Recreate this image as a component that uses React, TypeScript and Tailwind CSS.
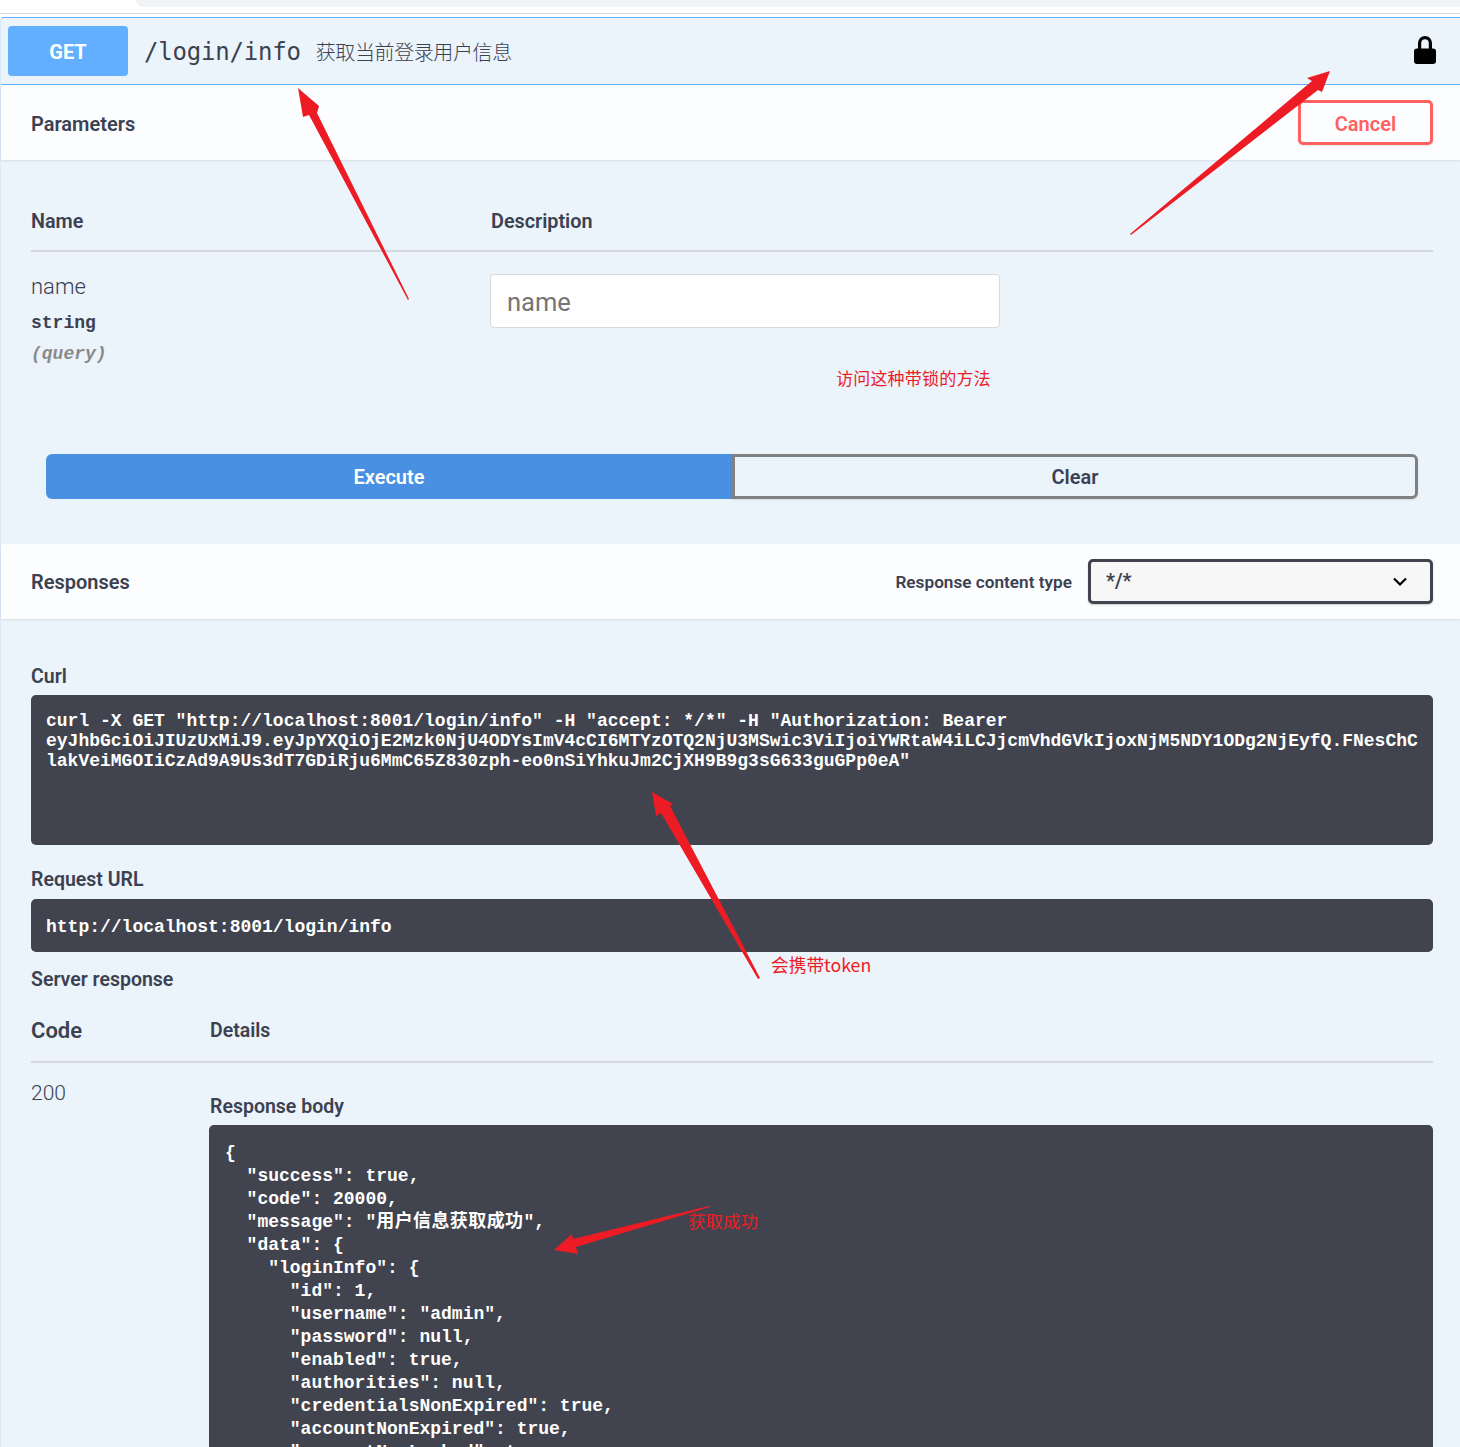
const sans = "font-['Roboto','Noto_Sans_CJK_SC',sans-serif]"
const mono = "font-['Liberation_Mono','Noto_Sans_CJK_SC',monospace]"
const cjk = "font-['Noto_Sans_CJK_SC',sans-serif]"

const curlText = `curl -X GET "http://localhost:8001/login/info" -H "accept: */*" -H "Authorization: Bearer
eyJhbGciOiJIUzUxMiJ9.eyJpYXQiOjE2Mzk0NjU4ODYsImV4cCI6MTYzOTQ2NjU3MSwic3ViIjoiYWRtaW4iLCJjcmVhdGVkIjoxNjM5NDY1ODg2NjEyfQ.FNesChC
lakVeiMGOIiCzAd9A9Us3dT7GDiRju6MmC65Z830zph-eo0nSiYhkuJm2CjXH9B9g3sG633guGPp0eA"`

const bodyTop = `{
  "success": true,
  "code": 20000,
  "message": "`

const bodyRest = `",
  "data": {
    "loginInfo": {
      "id": 1,
      "username": "admin",
      "password": null,
      "enabled": true,
      "authorities": null,
      "credentialsNonExpired": true,
      "accountNonExpired": true,
      "accountNonLocked": true,`

function Arrows() {
  return (
    <svg className="absolute left-0 top-0 pointer-events-none" width="1460" height="1447" viewBox="0 0 1460 1447">
      <g fill="#ed1c24">
        <path d="M408 300 L409 299 L317 113 L319 106 L298 88 L303 117 L309 115 Z" />
        <path d="M1130 234 L1131 235 L1318 90 L1322 92 L1330 71 L1307 78 L1312 81 Z" />
        <path d="M758 979 L760 978 L670 806 L673 804 L652 792 L656 816 L661 813 Z" />
        <path d="M709 1206 L710 1207 L576 1247 L578 1254 L554 1250 L572 1234 L573 1239 Z" />
      </g>
    </svg>
  )
}

export default function App() {
  return (
    <div className={`relative w-[1460px] h-[1447px] overflow-hidden bg-white ${sans}`}>
      <div className="h-[7px] ml-[136px] bg-[#f1f3f4] rounded-bl-[10px]" />
      <div className="mt-[6px] h-[1px] bg-[#d9d9d9]" />
      <div className="mt-[3px] border-t border-t-[#61affe] border-l border-l-[#dbe9f8] rounded-tl-[4px] bg-[#ebf3fb] h-[1430px]">
        {/* header */}
        <div className="flex items-center h-[67px] border-b border-[#61affe] pl-[7px] pr-[24px]">
          <div className="flex items-center justify-center w-[120px] h-[50px] pt-[2px] rounded-[4px] bg-[#61affe] text-white text-[20px] font-bold">
            GET
          </div>
          <span className="ml-[16px] mt-[2px] text-[#3b4151] text-[24px] font-['DejaVu_Sans_Mono',monospace] tracking-[-0.2px]">/login/info</span>
          <span className={`ml-[15px] mt-[2px] text-[#3b4151] text-[20px] font-light tracking-[-0.4px] ${cjk}`}>获取当前登录用户信息</span>
          <svg className="ml-auto -mt-[3px]" width="22" height="28" viewBox="0 0 22 28">
            <path d="M4 14V7a7 7 0 0 1 14 0v7h-3.2V7a3.8 3.8 0 0 0-7.6 0v7z" fill="#000" />
            <rect x="0" y="12.5" width="22" height="15.5" rx="3" fill="#000" />
          </svg>
        </div>

        {/* parameters bar */}
        <div className="flex items-center justify-between h-[75px] bg-[#fcfdfe] shadow-[0_1px_2px_rgba(0,0,0,0.1)] pl-[30px] pr-[27px]">
          <h4 className="pt-[2px] text-[#3b4151] text-[20px] font-semibold">Parameters</h4>
          <button className="w-[135px] h-[45px] -mt-[1px] pt-[3px] rounded-[5px] border-[3px] border-[#ff6060] text-[#ff6060] text-[20px] font-semibold shadow-[0_1px_2px_rgba(0,0,0,0.1)]">
            Cancel
          </button>
        </div>

        {/* table head */}
        <div className="ml-[30px] mr-[27px] mt-[47px] flex h-[45px] border-b-2 border-[#d5d9df] text-[#3b4151] text-[19.8px] font-semibold">
          <div className="w-[460px]">Name</div>
          <div>Description</div>
        </div>
        <div className="ml-[30px] mr-[27px] mt-[22px] flex h-[180px]">
          <div className="w-[459px] text-[#3b4151]">
            <div className="text-[22px] leading-[26px] font-light">name</div>
            <div className="mt-[12px] text-[18px] leading-[22px] font-bold font-['Liberation_Mono',monospace]">string</div>
            <div className="mt-[10px] text-[18px] leading-[20px] italic font-bold text-[#8a8a8a] font-['Liberation_Mono',monospace]">(query)</div>
          </div>
          <div className="flex items-center w-[510px] h-[54px] rounded-[4px] border border-[#d9d9d9] bg-white pl-[16px] pt-[3px] text-[25.5px] text-[#757575]">
            name
          </div>
        </div>

        {/* buttons */}
        <div className="flex ml-[45px] mr-[42px] h-[45px] text-[20px] font-semibold">
          <button className="w-[686px] rounded-l-[6px] bg-[#4990e2] text-white">Execute</button>
          <button className="flex-1 rounded-r-[6px] border-[3px] border-[#808080] text-[#3b4151] shadow-[0_1px_2px_rgba(0,0,0,0.1)]">Clear</button>
        </div>

        {/* responses bar */}
        <div className="mt-[45px] flex items-center h-[75px] bg-[#fcfdfe] shadow-[0_1px_2px_rgba(0,0,0,0.1)] pl-[30px] pr-[27px]">
          <h4 className="text-[#3b4151] text-[20px] font-semibold">Responses</h4>
          <span className="ml-auto pt-[2px] text-[#3b4151] text-[17.2px] font-semibold">Response content type</span>
          <div className="ml-[16px] flex items-center justify-between w-[345px] h-[45px] rounded-[5px] border-[3px] border-[#41444e] bg-[#f7f7f7] pl-[15px] pr-[22px] shadow-[0_1px_2px_rgba(0,0,0,0.2)]">
            <span className="text-[#3b4151] text-[20px] font-semibold -mt-[1px]">*/*</span>
            <svg width="16" height="10" viewBox="0 0 16 10" fill="none" stroke="#000" strokeWidth="2.2">
              <path d="M2 1.5 L8 7.5 L14 1.5" />
            </svg>
          </div>
        </div>

        {/* curl */}
        <div className="ml-[30px] mr-[27px]">
          <div className="mt-[46px] text-[#3b4151] text-[19.5px] leading-[24px] font-semibold">Curl</div>
          <pre className={`mt-[6px] h-[150px] rounded-[5px] bg-[#41444e] px-[15px] pt-[16px] text-white text-[18px] leading-[20px] font-bold whitespace-pre ${mono}`}>{curlText}</pre>
          <div className="mt-[23px] text-[#3b4151] text-[19.5px] leading-[24px] font-semibold">Request URL</div>
          <pre className={`mt-[7px] h-[53px] rounded-[5px] bg-[#41444e] px-[15px] pt-[18px] text-white text-[18px] leading-[20px] font-bold ${mono}`}>http://localhost:8001/login/info</pre>
          <div className="mt-[16px] text-[#3b4151] text-[19.5px] leading-[24px] font-semibold">Server response</div>

          <div className="mt-[23px] flex items-center h-[48px] border-b-2 border-[#d5d9df] pb-[16px] text-[#3b4151]">
            <div className="w-[179px] text-[22px] font-semibold">Code</div>
            <div className="pt-[2px] text-[19.5px] font-semibold">Details</div>
          </div>
          <div className="flex text-[#3b4151]">
            <div className="w-[178px] mt-[16px] text-[21px] leading-[28px] font-light">200</div>
            <div className="flex-1">
              <div className="mt-[31px] pl-px text-[19.5px] leading-[26px] font-semibold">Response body</div>
              <pre className={`mt-[5px] h-[400px] rounded-[5px] bg-[#41444e] pl-[16px] pt-[17px] text-white text-[18px] leading-[23px] font-bold ${mono}`}>
                {bodyTop}
                <span className="tracking-[0.4px]">用户信息获取成功</span>
                {bodyRest}
              </pre>
            </div>
          </div>
        </div>
      </div>

      <Arrows />
      <span className={`absolute left-[836px] top-[367px] text-[17px] leading-[22px] text-[#ed1c24] tracking-[0.2px] ${cjk}`}>访问这种带锁的方法</span>
      <span className={`absolute left-[771px] top-[953px] text-[17.7px] leading-[22px] text-[#ed1c24] ${cjk}`}>会携带token</span>
      <span className={`absolute left-[688px] top-[1210px] text-[17.5px] leading-[22px] text-[#ed1c24] ${cjk}`}>获取成功</span>
    </div>
  )
}
